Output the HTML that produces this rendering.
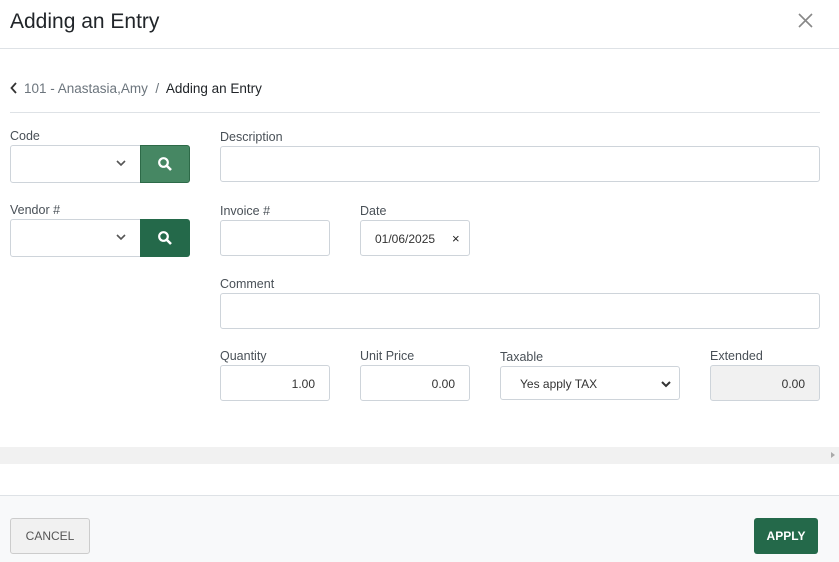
<!DOCTYPE html>
<html><head><style>
*{box-sizing:border-box;margin:0;padding:0}
body{width:839px;height:562px;background:#fff;font-family:"Liberation Sans",sans-serif;position:relative;overflow:hidden;color:#333}
.a{position:absolute}
.lbl{position:absolute;font-size:12.5px;color:#495057}
.in{position:absolute;border:1px solid #ced4da;border-radius:3px;background:#fff;height:36px;font-size:12px;color:#333;text-align:right;padding:11px 14px 0 0}
.btn{position:absolute;width:50px;height:38px;border-radius:0 3px 3px 0;display:flex;align-items:center;justify-content:center}
.chev{position:absolute;right:14px;top:13px}
</style></head><body>
<div class="a" style="left:10px;top:10px;font-size:21px;color:#212529">Adding an Entry</div>
<svg class="a" style="left:798px;top:13px" width="15" height="15" viewBox="0 0 15 15"><path d="M1 1L14 14M14 1L1 14" stroke="#888" stroke-width="1.6"/></svg>
<div class="a" style="left:0;top:48px;width:839px;border-top:1px solid #dee2e6"></div>
<svg class="a" style="left:10px;top:82px" width="8" height="12" viewBox="0 0 8 12"><path d="M6 1L1.5 6L6 11" stroke="#333" stroke-width="1.8" fill="none"/></svg>
<div class="a" style="left:24px;top:81px;font-size:13.5px;color:#6c757d">101 - Anastasia,Amy&nbsp; /&nbsp; <span style="color:#212529">Adding an Entry</span></div>
<div class="a" style="left:10px;top:112px;width:810px;border-top:1px solid #dee2e6"></div>

<div class="lbl" style="left:10px;top:129px">Code</div>
<div class="in" style="left:10px;top:145px;width:131px;height:38px;border-radius:3px 0 0 3px"><svg class="chev" width="10" height="8" viewBox="0 0 10 8"><path d="M1 2L5 6L9 2" stroke="#555" stroke-width="1.6" fill="none"/></svg></div>
<div class="btn" style="left:140px;top:145px;background:#468763;border:1px solid #2d6a48"><svg width="16" height="16" viewBox="0 0 16 16"><circle cx="6.5" cy="6.5" r="4.3" stroke="#fff" stroke-width="2.2" fill="none"/><path d="M9.5 9.5L14 14" stroke="#fff" stroke-width="2.6"/></svg></div>
<div class="lbl" style="left:10px;top:203px">Vendor #</div>
<div class="in" style="left:10px;top:219px;width:131px;height:38px;border-radius:3px 0 0 3px"><svg class="chev" width="10" height="8" viewBox="0 0 10 8"><path d="M1 2L5 6L9 2" stroke="#555" stroke-width="1.6" fill="none"/></svg></div>
<div class="btn" style="left:140px;top:219px;background:#24694a"><svg width="16" height="16" viewBox="0 0 16 16"><circle cx="6.5" cy="6.5" r="4.3" stroke="#fff" stroke-width="2.2" fill="none"/><path d="M9.5 9.5L14 14" stroke="#fff" stroke-width="2.6"/></svg></div>

<div class="lbl" style="left:220px;top:130px">Description</div>
<div class="in" style="left:220px;top:146px;width:600px"></div>
<div class="lbl" style="left:220px;top:204px">Invoice #</div>
<div class="in" style="left:220px;top:220px;width:110px"></div>
<div class="lbl" style="left:360px;top:204px">Date</div>
<div class="in" style="left:360px;top:220px;width:110px;text-align:left;padding-left:14px">01/06/2025<span style="position:absolute;left:91px;top:10px;font-size:13px;color:#222">×</span></div>
<div class="lbl" style="left:220px;top:277px">Comment</div>
<div class="in" style="left:220px;top:293px;width:600px"></div>
<div class="lbl" style="left:220px;top:349px">Quantity</div>
<div class="in" style="left:220px;top:365px;width:110px">1.00</div>
<div class="lbl" style="left:360px;top:349px">Unit Price</div>
<div class="in" style="left:360px;top:365px;width:110px">0.00</div>
<div class="lbl" style="left:500px;top:350px">Taxable</div>
<div class="in" style="left:500px;top:366px;width:180px;height:34px;text-align:left;padding:10px 0 0 19px">Yes apply TAX<svg class="chev" style="right:8px;top:13px" width="10" height="8" viewBox="0 0 10 8"><path d="M1 2L5 6L9 2" stroke="#333" stroke-width="2" fill="none"/></svg></div>
<div class="lbl" style="left:710px;top:349px">Extended</div>
<div class="in" style="left:710px;top:365px;width:110px;background:#f1f1f1">0.00</div>

<div class="a" style="left:0;top:447px;width:839px;height:17px;background:#f1f1f1"></div>
<svg class="a" style="left:830px;top:451px" width="6" height="8"><path d="M1 1L5 4L1 7Z" fill="#aaa"/></svg>
<div class="a" style="left:0;top:495px;width:839px;height:67px;background:#f8f9fa;border-top:1px solid #dee2e6"></div>
<div class="a" style="left:10px;top:518px;width:80px;height:36px;border:1px solid #ccc;border-radius:3px;background:#f1f1f1;font-size:12px;color:#555;text-align:center;line-height:34px">CANCEL</div>
<div class="a" style="left:754px;top:518px;width:64px;height:36px;border-radius:3px;background:#24694a;font-size:12px;color:#fff;font-weight:bold;text-align:center;line-height:36px">APPLY</div>
</body></html>
